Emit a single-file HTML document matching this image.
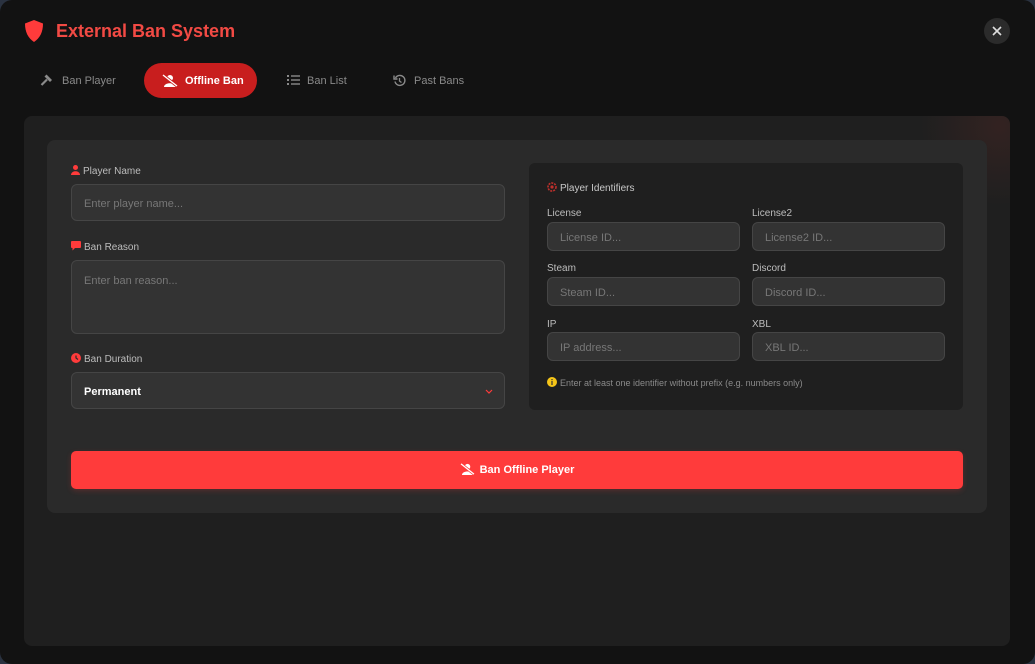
<!DOCTYPE html>
<html><head><meta charset="utf-8"><style>
*{box-sizing:border-box;margin:0;padding:0}
body{width:1035px;height:664px;background:#2a3240;font-family:"Liberation Sans",sans-serif;overflow:hidden;position:relative}
.win{position:absolute;left:0;top:0;width:1035px;height:664px;background:#121212;border-radius:12px;overflow:hidden}
.title{position:absolute;left:56px;top:21px;font-size:18px;font-weight:bold;color:#f24a44}
.shield{position:absolute;left:23px;top:19px}
.close{position:absolute;left:984px;top:18px;width:26px;height:26px;border-radius:50%;background:#2b2b2b}
.close svg{position:absolute;left:8px;top:8px}
.tab{position:absolute;top:64px;height:35px;line-height:35px;font-size:11px;color:#8a8a8a}
.tab svg{position:absolute;top:10px}
.pill{left:144px;top:63px;width:113px;background:#c81e1e;border-radius:18px;color:#fff;font-weight:bold;line-height:37px}
.panel{position:absolute;left:24px;top:116px;width:986px;height:530px;background:#1f1f1f;border-radius:8px;overflow:hidden}
.glow{position:absolute;right:-70px;top:-70px;width:160px;height:160px;background:radial-gradient(circle,rgba(110,45,40,.25),rgba(0,0,0,0) 70%)}
.card{position:absolute;left:47px;top:140px;width:940px;height:373px;background:#2a2a2a;border-radius:8px}
.lbl{position:absolute;font-size:10px;color:#bdbdbd}
.lbl svg{vertical-align:-1px;margin-right:3px}
.in{position:absolute;background:#333;border:1px solid #454545;border-radius:6px;font-size:11px;color:#777;padding-left:12px}
.id{position:absolute;left:529px;top:163px;width:434px;height:247px;background:#1f1f1f;border-radius:6px}
.btn{position:absolute;left:71px;top:451px;width:892px;height:38px;background:#ff3b3b;border-radius:5px;color:#fff;font-weight:bold;font-size:11px;text-align:center;line-height:39px;box-shadow:0 2px 6px rgba(255,59,59,.2)}
</style></head><body><div class="win">
<svg class="shield" width="22" height="24" viewBox="0 0 22 24"><path d="M11 1 L20 4.5 C20 13 17 19 11 23 C5 19 2 13 2 4.5 Z" fill="#ff3b3b"/></svg>
<div class="title">External Ban System</div>
<div class="close"><svg width="10" height="10" viewBox="0 0 10 10"><path d="M1 1 L9 9 M9 1 L1 9" stroke="#ddd" stroke-width="1.6"/></svg></div>

<div class="tab" style="left:40px"><svg width="13" height="13" viewBox="0 0 13 13" style="left:0"><path d="M6.5 0.5 L12 6 L10 8 L4.5 2.5Z" fill="#8a8a8a"/><path d="M7 5.5 L1.5 11" stroke="#8a8a8a" stroke-width="2.2"/></svg><span style="margin-left:22px">Ban Player</span></div>
<div class="tab pill"><svg width="16" height="13" viewBox="0 0 16 13" style="left:18px;top:11px"><circle cx="8" cy="4" r="3" fill="#fff"/><path d="M2 13 C2 8 14 8 14 13Z" fill="#fff"/><path d="M1 1 L15 12" stroke="#c81e1e" stroke-width="3"/><path d="M1 1 L15 12" stroke="#fff" stroke-width="1.4"/></svg><span style="margin-left:41px">Offline Ban</span></div>
<div class="tab" style="left:287px"><svg width="13" height="12" viewBox="0 0 13 12" style="left:0"><g fill="#8a8a8a"><rect x="0" y="1" width="2" height="2"/><rect x="0" y="5" width="2" height="2"/><rect x="0" y="9" width="2" height="2"/><rect x="4" y="1.3" width="9" height="1.4"/><rect x="4" y="5.3" width="9" height="1.4"/><rect x="4" y="9.3" width="9" height="1.4"/></g></svg><span style="margin-left:20px">Ban List</span></div>
<div class="tab" style="left:393px"><svg width="13" height="13" viewBox="0 0 13 13" style="left:0"><path d="M2.5 4 A5 5 0 1 1 2 7.5" fill="none" stroke="#8a8a8a" stroke-width="1.4"/><path d="M1 1.5 L1 5 L4.5 5" fill="none" stroke="#8a8a8a" stroke-width="1.4"/><path d="M6.5 4 V7 L8.5 8.5" fill="none" stroke="#8a8a8a" stroke-width="1.3"/></svg><span style="margin-left:21px">Past Bans</span></div>

<div class="panel"><div class="glow"></div></div>
<div class="card"></div>

<div class="lbl" style="left:71px;top:165px"><svg width="9" height="10" viewBox="0 0 9 10"><circle cx="4.5" cy="2.5" r="2.5" fill="#ff3b3b"/><path d="M0 10 C0 5 9 5 9 10Z" fill="#ff3b3b"/></svg>Player Name</div>
<div class="in" style="left:71px;top:184px;width:434px;height:37px;line-height:38px">Enter player name...</div>
<div class="lbl" style="left:71px;top:241px"><svg width="10" height="10" viewBox="0 0 10 10"><path d="M0 1 Q0 0 1 0 H9 Q10 0 10 1 V6 Q10 7 9 7 H4 L1.5 9.5 V7 H1 Q0 7 0 6Z" fill="#ff3b3b"/></svg>Ban Reason</div>
<div class="in" style="left:71px;top:260px;width:434px;height:74px;padding-top:14px">Enter ban reason...</div>
<div class="lbl" style="left:71px;top:353px"><svg width="10" height="10" viewBox="0 0 10 10"><circle cx="5" cy="5" r="5" fill="#ff3b3b"/><path d="M5 2.5 V5 L7 6.5" stroke="#2a2a2a" stroke-width="1.2" fill="none"/></svg>Ban Duration</div>
<div class="in" style="left:71px;top:372px;width:434px;height:37px;line-height:38px;color:#fff;font-weight:bold">Permanent<svg width="8" height="5" viewBox="0 0 8 5" style="position:absolute;right:11px;top:16px"><path d="M1 1 L4 4 L7 1" stroke="#ff3b3b" stroke-width="1.2" fill="none"/></svg></div>

<div class="id"></div>
<div class="lbl" style="left:547px;top:182px;color:#c8c8c8"><svg width="10" height="10" viewBox="0 0 10 10"><circle cx="5" cy="5" r="4" fill="none" stroke="#c0302c" stroke-width="1.6" stroke-dasharray="2 1"/><circle cx="5" cy="5" r="1.6" fill="#c0302c"/></svg>Player Identifiers</div>
<div class="lbl" style="left:547px;top:208px">License</div>
<div class="lbl" style="left:752px;top:208px">License2</div>
<div class="in" style="left:547px;top:222px;width:193px;height:29px;line-height:30px">License ID...</div>
<div class="in" style="left:752px;top:222px;width:193px;height:29px;line-height:30px">License2 ID...</div>
<div class="lbl" style="left:547px;top:263px">Steam</div>
<div class="lbl" style="left:752px;top:263px">Discord</div>
<div class="in" style="left:547px;top:277px;width:193px;height:29px;line-height:30px">Steam ID...</div>
<div class="in" style="left:752px;top:277px;width:193px;height:29px;line-height:30px">Discord ID...</div>
<div class="lbl" style="left:547px;top:319px">IP</div>
<div class="lbl" style="left:752px;top:319px">XBL</div>
<div class="in" style="left:547px;top:332px;width:193px;height:29px;line-height:30px">IP address...</div>
<div class="in" style="left:752px;top:332px;width:193px;height:29px;line-height:30px">XBL ID...</div>
<div class="lbl" style="left:547px;top:377px;font-size:9px;color:#8a8a8a"><svg width="10" height="10" viewBox="0 0 10 10"><circle cx="5" cy="5" r="5" fill="#f5c518"/><rect x="4.4" y="4" width="1.2" height="4" fill="#333"/><rect x="4.4" y="2" width="1.2" height="1.2" fill="#333"/></svg>Enter at least one identifier without prefix (e.g. numbers only)</div>

<div class="btn"><svg width="15" height="12" viewBox="0 0 16 13" style="vertical-align:-2px;margin-right:5px"><circle cx="8" cy="4" r="3" fill="#fff"/><path d="M2 13 C2 8 14 8 14 13Z" fill="#fff"/><path d="M1 1 L15 12" stroke="#ff3b3b" stroke-width="3"/><path d="M1 1 L15 12" stroke="#fff" stroke-width="1.4"/></svg>Ban Offline Player</div>
</div></body></html>
